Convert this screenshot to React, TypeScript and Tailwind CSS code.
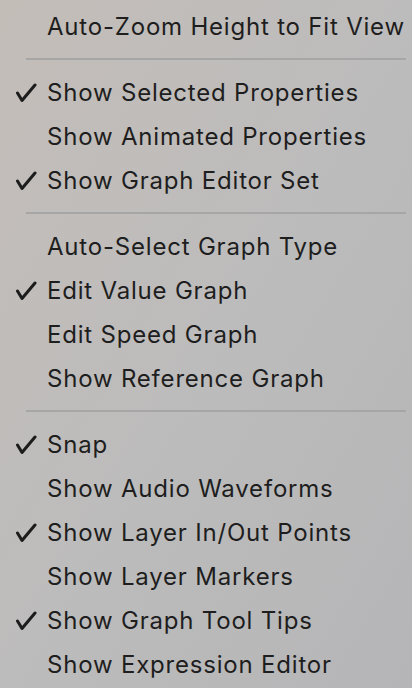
import React from "react";

type Item = { label: string; checked?: boolean } | "sep";

const items: Item[] = [
  { label: "Auto-Zoom Height to Fit View" },
  "sep",
  { label: "Show Selected Properties", checked: true },
  { label: "Show Animated Properties" },
  { label: "Show Graph Editor Set", checked: true },
  "sep",
  { label: "Auto-Select Graph Type" },
  { label: "Edit Value Graph", checked: true },
  { label: "Edit Speed Graph" },
  { label: "Show Reference Graph" },
  "sep",
  { label: "Snap", checked: true },
  { label: "Show Audio Waveforms" },
  { label: "Show Layer In/Out Points", checked: true },
  { label: "Show Layer Markers" },
  { label: "Show Graph Tool Tips", checked: true },
  { label: "Show Expression Editor" },
];

function Check() {
  return (
    <svg width="22" height="24" viewBox="0 0 22 24" className="block">
      <path
        d="M2.5 13 L7 20.5 L20 5"
        fill="none"
        stroke="#1c1c1c"
        strokeWidth="3"
        strokeLinecap="round"
        strokeLinejoin="round"
      />
    </svg>
  );
}

export default function App() {
  return (
    <div
      className="w-[412px] h-[688px] overflow-hidden bg-gradient-to-br from-[#c3bdb8] via-[#bdbcbc] to-[#b5b5b7] pt-[4px] text-[#1e1e1e]"
      style={{ fontFamily: "Inter, 'Noto Sans', sans-serif" }}
    >
      {items.map((it, i) =>
        it === "sep" ? (
          <div key={i} className="h-[22px] flex items-center pl-[26px] pr-[6px]">
            <div className="h-[2px] w-full bg-[#a6a6a6]" />
          </div>
        ) : (
          <div key={i} className="h-[44px] flex items-center">
            <div className="w-[47px] flex justify-start pl-[15px]">
              {it.checked ? <Check /> : null}
            </div>
            <span className="text-[24px] leading-none tracking-[0.8px] whitespace-nowrap pt-[2px]">
              {it.label}
            </span>
          </div>
        )
      )}
    </div>
  );
}
